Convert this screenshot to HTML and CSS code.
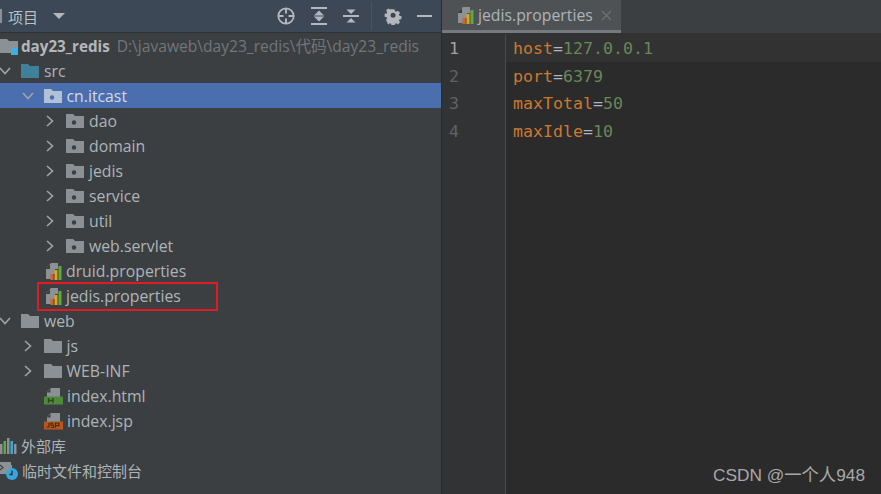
FILE: index.html
```html
<!DOCTYPE html>
<html lang="zh">
<head>
<meta charset="utf-8">
<title>day23_redis</title>
<link rel="stylesheet" href="styles.css">
</head>
<body>
<svg class="defs" width="0" height="0" aria-hidden="true">
  <symbol id="folder" viewBox="0 0 18 16"><path d="M0 1h7l2 2h9v12H0z"/></symbol>
  <symbol id="pkg" viewBox="0 0 18 16"><path d="M0 1h7l2 2h9v12H0z"/><circle cx="8" cy="9.500" r="2.200" fill="#3c3f41"/></symbol>
  <symbol id="pkg-sel" viewBox="0 0 18 16"><path d="M0 1h7l2 2h9v12H0z"/><circle cx="8" cy="9.500" r="2.200" fill="#4b6eaf"/></symbol>
  <symbol id="props" viewBox="0 0 18 18">
    <path fill="#8c9196" d="M2 6l5-5h7v6h-3v5H8v5H2z"/><path fill="#3c3f41" d="M6 2v5H2V6z"/>
    <rect x="6.500" y="12" width="3" height="6" fill="#d9622b"/><rect x="10.500" y="8" width="3" height="10" fill="#e0a31c"/><rect x="14.500" y="4" width="3" height="14" fill="#62a83a"/>
  </symbol>
  <symbol id="chev-r" viewBox="0 0 10 12"><path d="M2 1l5.500 5L2 11" fill="none" stroke="#a0a4a8" stroke-width="1.600"/></symbol>
  <symbol id="chev-d" viewBox="0 0 12 10"><path d="M1 2l5 5.500L11 2" fill="none" stroke="#a0a4a8" stroke-width="1.600"/></symbol>
</svg>
<div class="app">
  <aside class="panel">
    <header class="panel-head">
      <span class="stub"></span>
      <span class="head-title">项目</span>
      <span class="caret"></span>
      <span class="grow"></span>
      <svg class="tool t1" width="20" height="20" viewBox="0 0 20 20"><circle cx="10" cy="10" r="7.700" fill="none" stroke="#b4b8bb" stroke-width="1.800"/><path d="M10 2v5.500M10 12.500V18M2 10h5.500M12.500 10H18" stroke="#b4b8bb" stroke-width="2"/></svg>
      <svg class="tool t2" width="18" height="20" viewBox="0 0 18 20"><path d="M1 2h16M1 18h16" stroke="#b4b8bb" stroke-width="2"/><path d="M9 4.500l4.500 4.500h-9zM9 15.500L4.500 11h9z" fill="#b4b8bb"/><path d="M4 10h10" stroke="#b4b8bb" stroke-width="1"/></svg>
      <svg class="tool t3" width="18" height="20" viewBox="0 0 18 20"><path d="M1 10h16" stroke="#b4b8bb" stroke-width="2"/><path d="M9 8L4.500 3.500h9zM9 12l4.500 4.500h-9z" fill="#b4b8bb"/></svg>
      <span class="sep"></span>
      <svg class="tool t4" width="18" height="18" viewBox="0 0 18 18"><path fill="#b4b8bb" fill-rule="evenodd" d="M7.200 1h3.600l.5 2.400 1.400.6 2.100-1.300 2.500 2.500-1.300 2.100.6 1.400 2.400.5v3.400l-2.400.5-.6 1.400 1.300 2.100-2.500 2.500-2.100-1.300-1.400.6-.5 2.400H7.200l-.5-2.400-1.400-.6-2.100 1.300L.7 13.900 2 11.800l-.6-1.400-2.400-.5V6.500l2.400-.5.6-1.400L.7 2.500 3.200 0l2.100 1.300 1.400-.6zM9 5.200a3 3 0 1 0 0 6 3 3 0 0 0 0-6z" transform="translate(1.500 1.400) scale(.84)"/></svg>
      <span class="minus"></span>
    </header>
    <div class="tree">
      <div class="row root">
        <svg class="icon gray" width="18" height="16"><use href="#folder"/></svg>
        <span class="blue-badge"></span>
        <b class="name bold">day23_redis</b><span class="path">D:\javaweb\day23_redis\代码\day23_redis</span>
      </div>
      <div class="row d1"><svg class="chev" width="12" height="10"><use href="#chev-d"/></svg><svg class="icon teal" width="18" height="16"><use href="#folder"/></svg><span class="name">src</span></div>
      <div class="row d2 selected"><svg class="chev" width="12" height="10"><use href="#chev-d"/></svg><svg class="icon pale" width="18" height="16"><use href="#pkg-sel"/></svg><span class="name">cn.itcast</span></div>
      <div class="row d3"><svg class="chev" width="12" height="12"><use href="#chev-r"/></svg><svg class="icon gray" width="18" height="16"><use href="#pkg"/></svg><span class="name">dao</span></div>
      <div class="row d3"><svg class="chev" width="12" height="12"><use href="#chev-r"/></svg><svg class="icon gray" width="18" height="16"><use href="#pkg"/></svg><span class="name">domain</span></div>
      <div class="row d3"><svg class="chev" width="12" height="12"><use href="#chev-r"/></svg><svg class="icon gray" width="18" height="16"><use href="#pkg"/></svg><span class="name">jedis</span></div>
      <div class="row d3"><svg class="chev" width="12" height="12"><use href="#chev-r"/></svg><svg class="icon gray" width="18" height="16"><use href="#pkg"/></svg><span class="name">service</span></div>
      <div class="row d3"><svg class="chev" width="12" height="12"><use href="#chev-r"/></svg><svg class="icon gray" width="18" height="16"><use href="#pkg"/></svg><span class="name">util</span></div>
      <div class="row d3"><svg class="chev" width="12" height="12"><use href="#chev-r"/></svg><svg class="icon gray" width="18" height="16"><use href="#pkg"/></svg><span class="name">web.servlet</span></div>
      <div class="row leaf"><svg class="icon" width="18" height="18"><use href="#props"/></svg><span class="name">druid.properties</span></div>
      <div class="row leaf"><svg class="icon" width="18" height="18"><use href="#props"/></svg><span class="name">jedis.properties</span><span class="mark"></span></div>
      <div class="row d1"><svg class="chev" width="12" height="10"><use href="#chev-d"/></svg><svg class="icon gray" width="18" height="16"><use href="#folder"/></svg><span class="name">web</span></div>
      <div class="row d2"><svg class="chev" width="12" height="12"><use href="#chev-r"/></svg><svg class="icon gray" width="18" height="16"><use href="#folder"/></svg><span class="name">js</span></div>
      <div class="row d2"><svg class="chev" width="12" height="12"><use href="#chev-r"/></svg><svg class="icon gray" width="18" height="16"><use href="#folder"/></svg><span class="name">WEB-INF</span></div>
      <div class="row leaf">
        <svg class="icon" width="19" height="19" viewBox="0 0 19 19"><path fill="#8c9196" d="M3 6l4-4h9v9H3z"/><path fill="#3c3f41" d="M6.500 3v3.500H3V6z"/><rect y="10.500" width="19" height="8" fill="#4f8a3a"/><path d="M4.500 12v5M9 12v5M4.500 14.500H9" stroke="#2a4424" stroke-width="1.400"/></svg>
        <span class="name">index.html</span>
      </div>
      <div class="row leaf">
        <svg class="icon" width="19" height="19" viewBox="0 0 19 19"><path fill="#8c9196" d="M3 6l4-4h9v9H3z"/><path fill="#3c3f41" d="M6.500 3v3.500H3V6z"/><rect y="10.500" width="19" height="8" fill="#b9561f"/><path d="M5 12v4H2.500M9.500 12H7v2.200h2.500v2.300H7M11.500 17v-5H15v2.700h-3.500" fill="none" stroke="#4c2a14" stroke-width="1.200"/></svg>
        <span class="name">index.jsp</span>
      </div>
      <div class="row ext">
        <svg class="icon" width="17" height="18" viewBox="0 0 17 18"><rect y="7" width="2.500" height="10" fill="#8c9196"/><rect x="3.500" y="4" width="2.500" height="13" fill="#62a83a"/><rect x="7" y="1" width="2.500" height="16" fill="#8c9196"/><rect x="10.500" y="4" width="2.500" height="13" fill="#3fa8d8"/><rect x="14" y="7" width="2.500" height="10" fill="#8c9196"/></svg>
        <span class="name">外部库</span>
      </div>
      <div class="row ext">
        <svg class="icon" width="18" height="19" viewBox="0 0 18 19"><path fill="#8c9196" d="M-1 1h12v3h1v9H-1z"/><path d="M0 4l3 2.500L0 9" fill="none" stroke="#3c3f41" stroke-width="1.200"/><circle cx="12" cy="13" r="6" fill="#35a7dc"/><path d="M12 9.500V13.500h-2.500" fill="none" stroke="#24313a" stroke-width="1.300"/></svg>
        <span class="name">临时文件和控制台</span>
      </div>
    </div>
  </aside>
  <main class="editor">
    <div class="tabs">
      <div class="tab">
        <svg class="icon" width="18" height="18"><use href="#props"/></svg>
        <span class="tab-name">jedis.properties</span>
        <svg class="close" width="11" height="11" viewBox="0 0 11 11"><path d="M1 1l9 9M10 1l-9 9" stroke="#6e7275" stroke-width="1.200"/></svg>
      </div>
    </div>
    <div class="code">
      <div class="line current"><span class="num">1</span><span class="txt"><span class="k">host</span><span class="eq">=</span><span class="v">127.0.0.1</span></span></div>
      <div class="line"><span class="num">2</span><span class="txt"><span class="k">port</span><span class="eq">=</span><span class="v">6379</span></span></div>
      <div class="line"><span class="num">3</span><span class="txt"><span class="k">maxTotal</span><span class="eq">=</span><span class="v">50</span></span></div>
      <div class="line"><span class="num">4</span><span class="txt"><span class="k">maxIdle</span><span class="eq">=</span><span class="v">10</span></span></div>
      <div class="filler"><span class="gutter-fill"></span></div>
      <div class="watermark">CSDN @一个人948</div>
    </div>
  </main>
</div>
</body>
</html>
```

FILE: styles.css
```css
* { box-sizing: border-box; }
html, body { margin: 0; height: 100%; }
body { width: 881px; height: 494px; overflow: hidden; background: #2b2b2b; font-family: "Open Sans", "Noto Sans CJK SC", sans-serif; }
.defs { position: absolute; }
.app { display: flex; height: 494px; }

.panel { width: 442px; flex: none; display: flex; flex-direction: column; background: #3c3f41; border-right: 1px solid #2b2b2b; overflow: hidden; }
.panel-head { height: 33px; flex: none; display: flex; align-items: center; background: #3c4856; border-bottom: 1px solid #323232; }
.stub { width: 2px; height: 14px; background: #8c9196; margin-right: 6px; }
.head-title { color: #bbbfc2; font: 15px "Noto Sans CJK SC", sans-serif; width: 45px; }
.caret { width: 0; height: 0; border-left: 6px solid transparent; border-right: 6px solid transparent; border-top: 6px solid #b4b8bb; }
.grow { flex: 1; }
.tool { flex: none; }
.t1 { margin-right: 14px; }
.t2 { margin-right: 14px; }
.t3 { margin-right: 11px; }
.sep { width: 1px; height: 28px; background: #4a545e; margin-right: 12px; }
.t4 { margin-right: 15px; }
.minus { width: 15px; height: 2px; background: #b4b8bb; margin-right: 9px; }

.tree { display: flex; flex-direction: column; }
.row { position: relative; height: 25px; flex: none; display: flex; align-items: center; font-size: 15.800px; color: #adb4b9; white-space: nowrap; }
.icon { flex: none; margin-right: 5px; display: block; }
.chev { flex: none; width: 12px; margin-right: 10px; }
.gray { fill: #8c9196; }
.teal { fill: #3f8199; }
.pale { fill: #b3c1d6; }
.root .icon { margin-right: 3px; }
.d1 { margin-left: -1px; }
.d2 { padding-left: 21.500px; }
.d3 { padding-left: 44px; }
.leaf { padding-left: 44px; }
.leaf .icon { margin-right: 4px; }
.ext { font-size: 15px; }
.ext .icon { margin-right: 4px; }
.selected { background: #4b6eaf; color: #d3dae6; }
.bold { font-weight: 700; font-size: 15.200px; color: #b4b7ba; }
.path { margin-left: 7px; color: #71767a; font-size: 15.600px; }
.blue-badge { position: absolute; left: 11px; top: 15px; width: 7px; height: 7px; background: #38b2e6; }
.mark { position: absolute; left: 37px; top: -1px; width: 181px; height: 29px; border: 2px solid #e01b24; }

.editor { flex: 1; display: flex; flex-direction: column; min-width: 0; }
.tabs { height: 34px; flex: none; display: flex; background: #3c3f41; border-bottom: 1px solid #323232; }
.tab { width: 179px; height: 33px; display: flex; align-items: center; padding-left: 14px; background: #4e5254; border-bottom: 3px solid #747a80; color: #adb4b9; font-size: 15.800px; }
.tab .icon { margin-right: 4px; }
.close { margin-left: 8px; }

.code { position: relative; flex: 1; display: flex; flex-direction: column; font: 16.600px/27.500px "DejaVu Sans Mono", monospace; }
.line { height: 27.500px; display: flex; flex: none; }
.num { width: 64px; padding: 1px 0 0 7px; color: #606366; background: #313335; border-right: 1px solid #4a4a4a; flex: none; }
.txt { padding: 1px 0 0 7px; flex: 1; }
.current .num { color: #a4a3a3; }
.current .txt { background: #323232; }
.k { color: #cc7832; }
.eq { color: #a9b7c6; }
.v { color: #6a8759; }
.filler { flex: 1; }
.gutter-fill { display: block; width: 64px; height: 100%; background: #313335; border-right: 1px solid #4a4a4a; }
.watermark { position: absolute; right: 16px; bottom: 9px; font: 17.300px/20px "Liberation Sans", "Noto Sans CJK SC", sans-serif; color: #a8a8a8; }
```
